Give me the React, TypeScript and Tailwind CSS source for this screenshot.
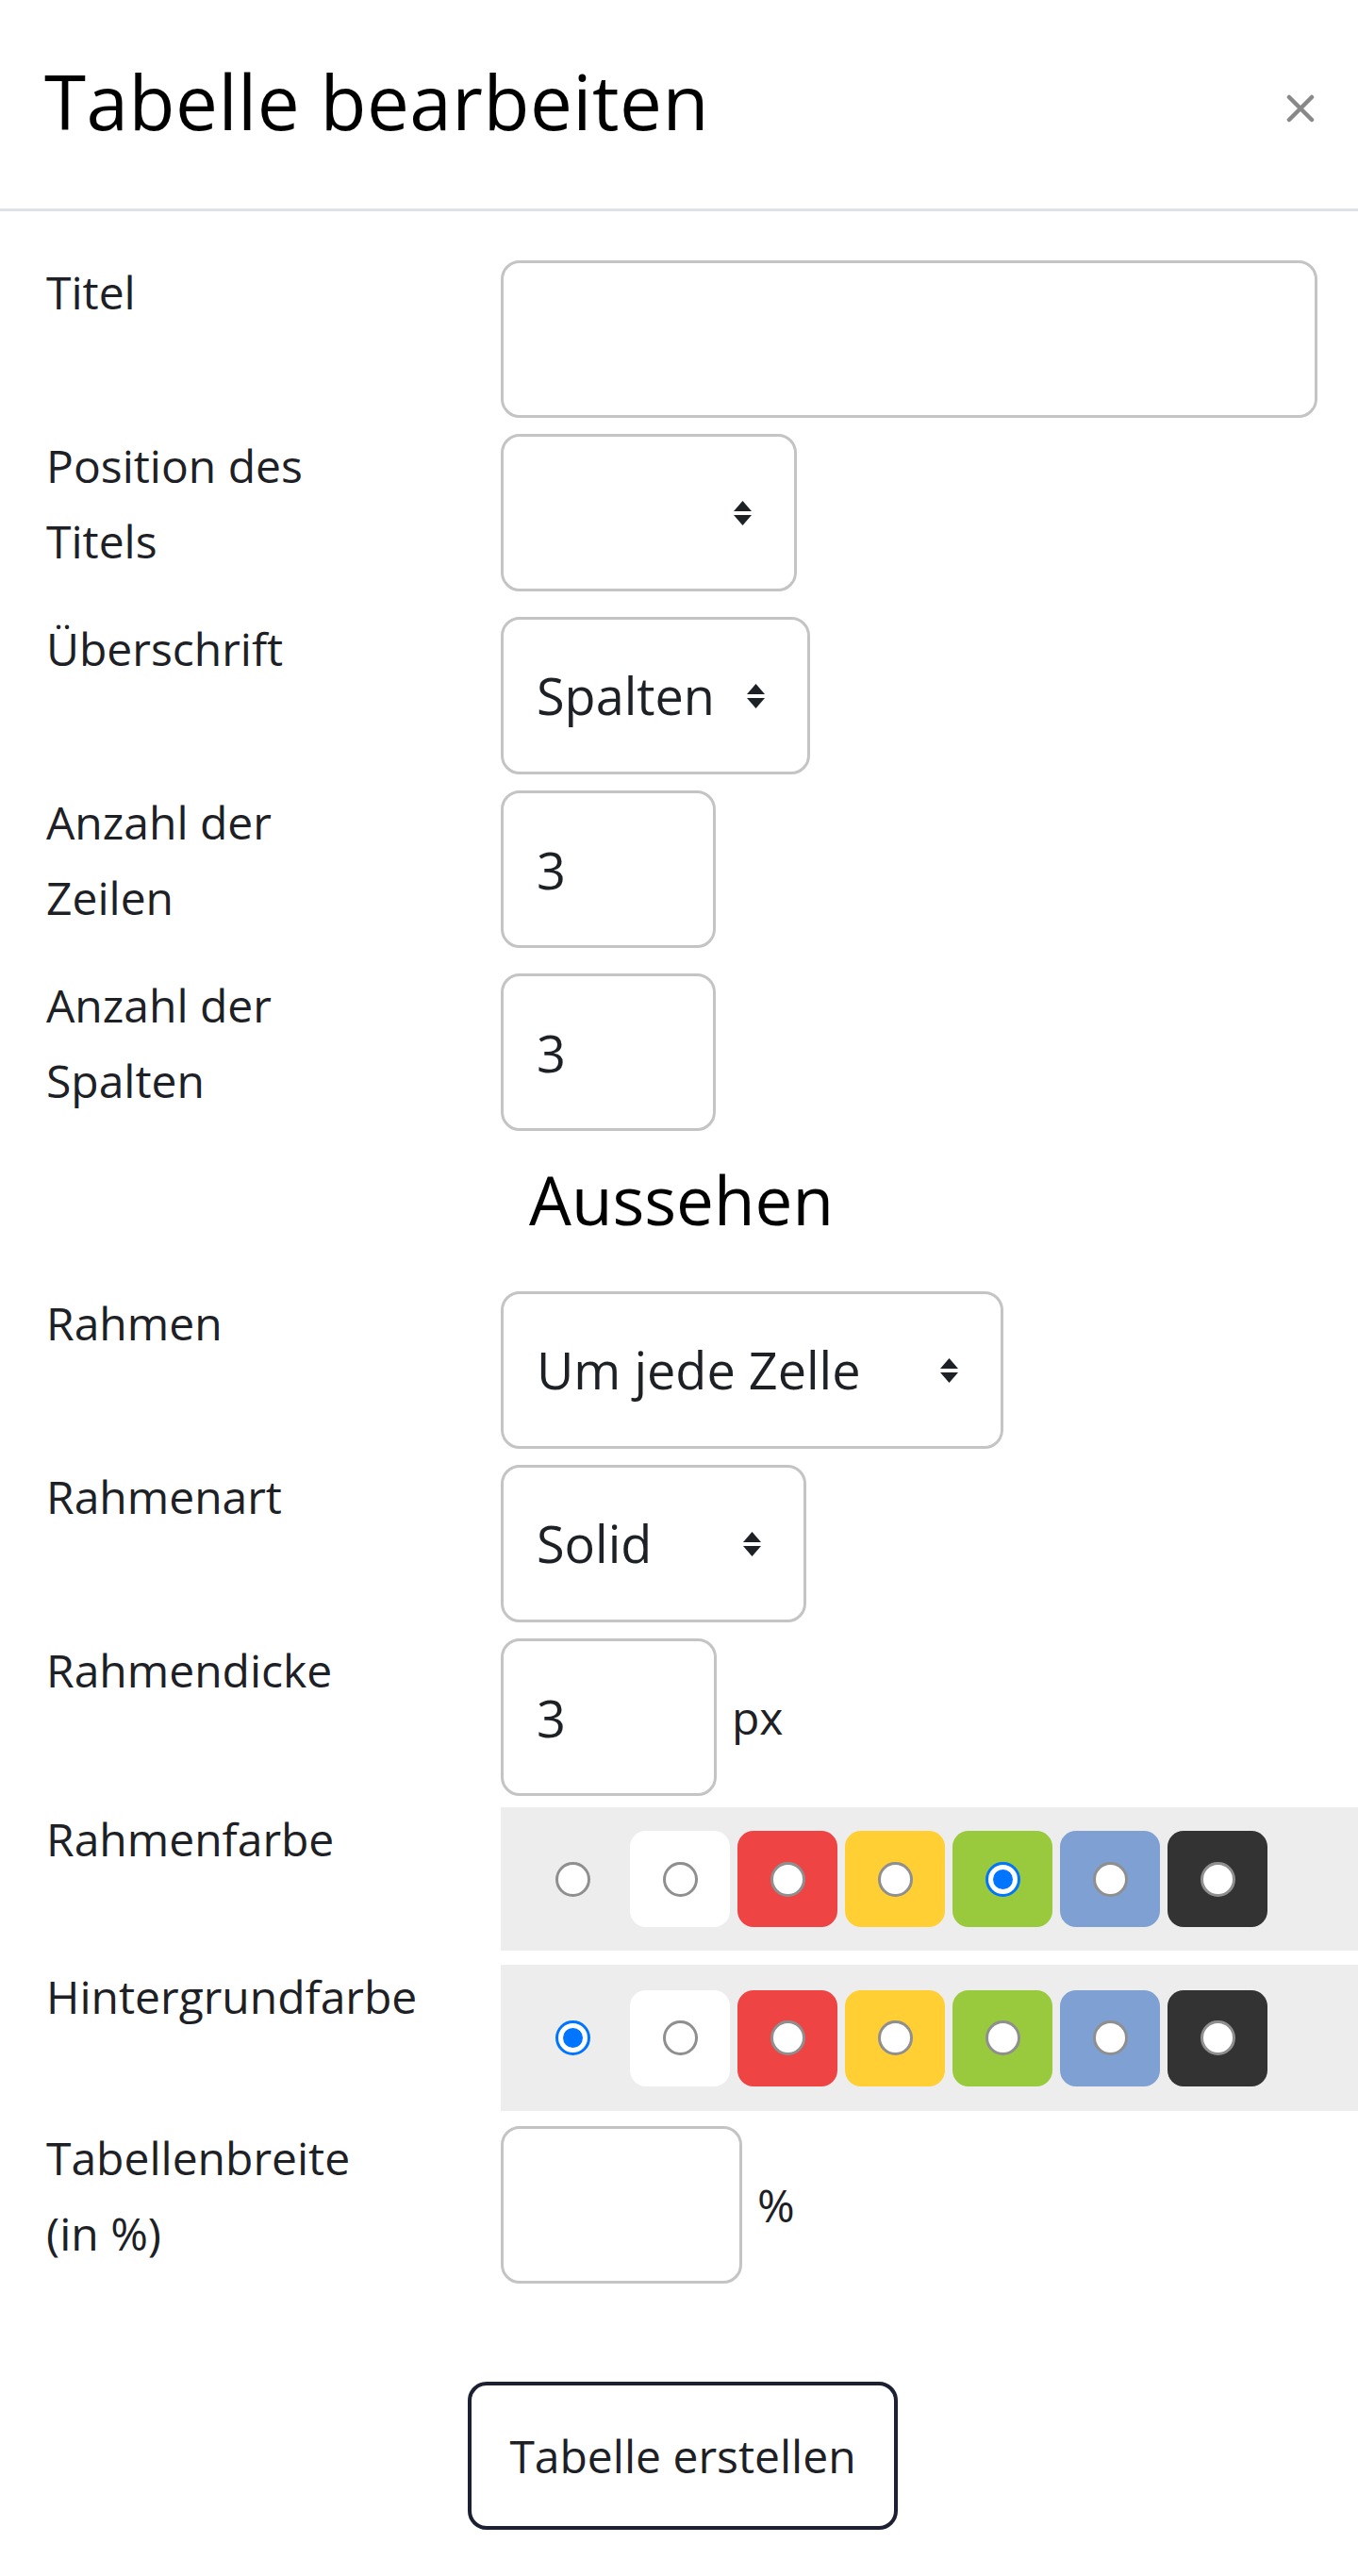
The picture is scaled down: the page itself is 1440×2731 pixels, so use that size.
import React from "react";

const LABEL = "text-[48px] leading-[80px] text-[#1d2125] whitespace-nowrap mt-[-6px] pb-[23px]";

function Arrow() {
  return (
    <svg width="23" height="28" viewBox="0 0 23 28" className="ml-auto flex-none">
      <path d="M11.5 1 L21 12 L2 12 Z" fill="#1d2125" />
      <path d="M2 16 L21 16 L11.5 27 Z" fill="#1d2125" />
    </svg>
  );
}

function Select({ value, w }: { value: string; w: string }) {
  return (
    <div
      className={`flex h-[167px] ${w} flex-none items-center rounded-[20px] border-[3px] border-[#c4c4c4] bg-white pl-[35px] pr-[43px] text-[54px] text-[#1d2125]`}
    >
      <span>{value}</span>
      <Arrow />
    </div>
  );
}

function Field({ value, w }: { value: string; w: string }) {
  return (
    <input
      readOnly
      defaultValue={value}
      className={`h-[167px] ${w} flex-none rounded-[20px] border-[3px] border-[#c4c4c4] bg-white pl-[35px] text-[54px] text-[#1d2125] outline-none`}
    />
  );
}

function Row({
  label,
  children,
  mb = "mb-[17px]",
}: {
  label: React.ReactNode;
  children: React.ReactNode;
  mb?: string;
}) {
  return (
    <div className={`grid grid-cols-[482px_1fr] items-start ${mb}`}>
      <div className={LABEL}>{label}</div>
      <div className="flex items-center">{children}</div>
    </div>
  );
}

function Radio({ checked }: { checked?: boolean }) {
  return checked ? (
    <span className="flex h-[37px] w-[37px] items-center justify-center rounded-full border-[3px] border-[#0075ff] bg-white">
      <span className="h-[21px] w-[21px] rounded-full bg-[#0075ff]" />
    </span>
  ) : (
    <span className="block h-[37px] w-[37px] rounded-full border-[3px] border-[#8f8f8f] bg-white" />
  );
}

const SWATCHES = [
  "bg-transparent",
  "bg-white",
  "bg-[#ef4444]",
  "bg-[#ffcf33]",
  "bg-[#99c93c]",
  "bg-[#7ea0d2]",
  "bg-[#333333]",
];

function ColorBar({ selected, h }: { selected: number; h: string }) {
  return (
    <div className={`flex ${h} w-[909px] flex-none items-center gap-[8px] bg-[#ededed] pl-[23px]`}>
      {SWATCHES.map((c, i) => (
        <div
          key={i}
          className={`flex h-[102px] w-[106px] flex-none items-center justify-center rounded-[17px] ${c}`}
        >
          <Radio checked={i === selected} />
        </div>
      ))}
    </div>
  );
}

export default function App() {
  return (
    <div className="min-h-[2731px] w-[1440px] overflow-hidden bg-white font-['Open_Sans',sans-serif] text-[#1d2125]">
      {/* Header */}
      <div className="flex items-start justify-between border-b-[3px] border-[#dee2e6] pb-[54px] pl-[47px] pr-[45px] pt-[47px]">
        <h1 className="text-[80px] font-medium leading-[1.5] tracking-[0.5px] text-black">Tabelle bearbeiten</h1>
        <button className="mt-[52px] flex h-[32px] w-[32px] items-center justify-center opacity-80" aria-label="Schließen">
          <svg width="30" height="30" viewBox="0 0 30 30">
            <path d="M3 3 L27 27 M27 3 L3 27" stroke="#6b6b6b" strokeWidth="4.5" strokeLinecap="round" />
          </svg>
        </button>
      </div>

      {/* Body */}
      <div className="pl-[49px] pr-[43px] pt-[52px]">
        <Row label="Titel">
          <Field value="" w="w-full" />
        </Row>
        <Row label={<>Position des<br />Titels</>}>
          <Select value="" w="w-[314px]" />
        </Row>
        <Row label="Überschrift">
          <Select value="Spalten" w="w-[328px]" />
        </Row>
        <Row label={<>Anzahl der<br />Zeilen</>}>
          <Field value="3" w="w-[228px]" />
        </Row>
        <Row label={<>Anzahl der<br />Spalten</>}>
          <Field value="3" w="w-[228px]" />
        </Row>

        <div className="mb-[55px] mt-[20px] grid grid-cols-[482px_1fr]">
          <div />
          <h4 className="pl-[30px] text-[71px] leading-[85px] text-black">Aussehen</h4>
        </div>

        <Row label="Rahmen">
          <Select value="Um jede Zelle" w="w-[533px]" />
        </Row>
        <Row label="Rahmenart">
          <Select value="Solid" w="w-[324px]" />
        </Row>
        <Row label="Rahmendicke" mb="mb-[12px]">
          <Field value="3" w="w-[229px]" />
          <span className="ml-[16px] text-[48px] text-[#1d2125]">px</span>
        </Row>
        <Row label="Rahmenfarbe" mb="mb-[15px]">
          <ColorBar selected={4} h="h-[152px]" />
        </Row>
        <Row label="Hintergrundfarbe" mb="mb-[16px]">
          <ColorBar selected={0} h="h-[155px]" />
        </Row>
        <Row label={<>Tabellenbreite<br />(in %)</>} mb="mb-0">
          <Field value="" w="w-[256px]" />
          <span className="ml-[16px] text-[48px] text-[#1d2125]">%</span>
        </Row>
      </div>

      <div className="flex justify-center pb-[41px] pt-[94px]">
        <button className="ml-[8px] flex h-[157px] items-center rounded-[20px] border-[4px] border-[#1d2033] bg-white px-[40px] text-[48px] text-[#1d2125]">
          Tabelle erstellen
        </button>
      </div>
    </div>
  );
}
